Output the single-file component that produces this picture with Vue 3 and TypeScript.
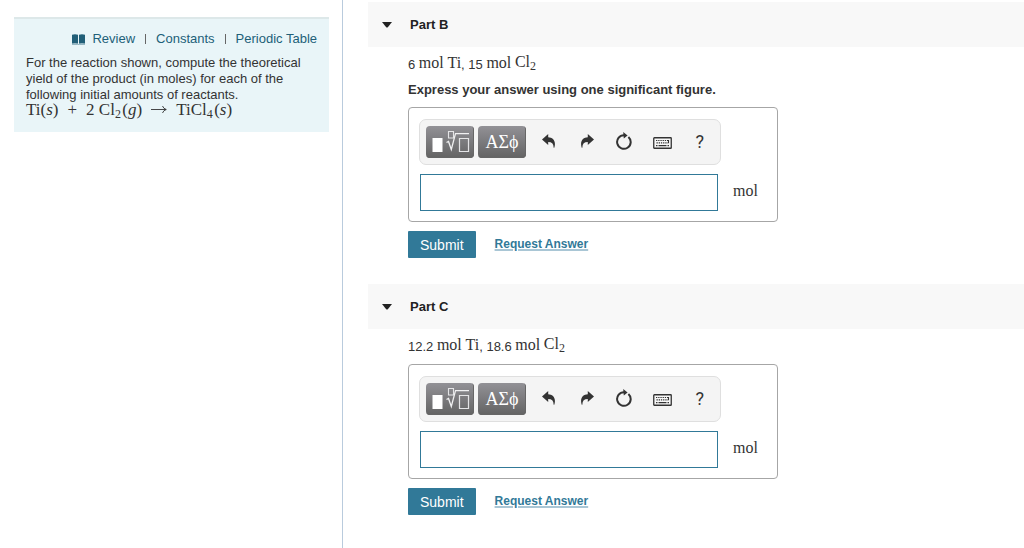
<script setup lang="ts">
import { reactive } from 'vue'

interface Part {
  id: string
  title: string
  titanium: string
  chlorine: string
  instruction?: string
}

const parts: Part[] = [
  {
    id: 'b',
    title: 'Part B',
    titanium: '6',
    chlorine: '15',
    instruction: 'Express your answer using one significant figure.',
  },
  { id: 'c', title: 'Part C', titanium: '12.2', chlorine: '18.6' },
]

const answers = reactive<Record<string, string>>({ b: '', c: '' })
const collapsed = reactive<Record<string, boolean>>({ b: false, c: false })
</script>

<template>
  <div class="page">
    <aside class="sidebar">
      <section class="problem">
        <nav class="resources">
          <a href="#review" class="review">
            <svg class="book" viewBox="0 0 13 11" aria-hidden="true">
              <path d="M0 .8Q3 -.4 6 .8V9.6Q3 8.8 0 9.6Z M7 .8Q10 -.4 13 .8V9.6Q10 8.8 7 9.6Z" fill="#215f78" />
              <path d="M0 10.2H5.6L6.5 10.7L7.4 10.2H13" fill="none" stroke="#215f78" stroke-width=".6" />
            </svg>
            Review
          </a>
          <span class="divider"></span>
          <a href="#constants">Constants</a>
          <span class="divider"></span>
          <a href="#periodic-table">Periodic Table</a>
        </nav>
        <p class="statement">
          For the reaction shown, compute the theoretical yield of the product (in moles) for each of the
          following initial amounts of reactants.
        </p>
        <p class="equation">
          <span>Ti(<i>s</i>)</span>
          <span>+</span>
          <span>2 Cl<sub>2</sub>&hairsp;(<i>g</i>)</span>
          <svg class="arrow" viewBox="0 0 16 9" aria-hidden="true">
            <path d="M0 4.5H15M11.5 1Q12.5 3.8 15.3 4.5Q12.5 5.2 11.5 8" fill="none" stroke="#333" stroke-width=".9" />
          </svg>
          <span>TiCl<sub>4</sub>&hairsp;(<i>s</i>)</span>
        </p>
      </section>
    </aside>

    <main class="content">
      <section v-for="part in parts" :key="part.id" class="part">
        <h2 class="part-header">
          <button
            type="button"
            class="toggle"
            :aria-expanded="!collapsed[part.id]"
            @click="collapsed[part.id] = !collapsed[part.id]"
          >
            <svg class="caret" viewBox="0 0 10 6" aria-hidden="true">
              <path d="M0 0H10L6 5Q5 6 4 5Z" fill="#222" />
            </svg>
            {{ part.title }}
          </button>
        </h2>

        <form v-if="!collapsed[part.id]" class="part-body" @submit.prevent>
          <p class="given">
            {{ part.titanium }} <span class="math">mol Ti</span>, {{ part.chlorine }}
            <span class="math">mol</span> <span class="math species">Cl<sub>2</sub></span>
          </p>
          <p v-if="part.instruction" class="instruction">{{ part.instruction }}</p>

          <div class="editor">
            <div class="toolbar">
              <button type="button" class="palette" aria-label="Templates">
                <svg class="template-icon" viewBox="0 0 48 32" aria-hidden="true">
                  <rect x="6.5" y="12" width="10" height="14" fill="#fff" />
                  <path d="M22.5 5.5H27.5V12H22.5Z" fill="none" stroke="#e4e4e6" stroke-width="1.1" />
                  <path d="M20.5 16.5L22.5 15.5L25.3 23.5L29.5 7.7H43" fill="none" stroke="#f0f0f1" stroke-width="1.3" />
                  <path d="M33.5 12.5H42.5V25.5H33.5Z" fill="none" stroke="#e4e4e6" stroke-width="1.2" />
                </svg>
              </button>
              <button type="button" class="palette">ΑΣϕ</button>
              <button type="button" class="tool" aria-label="Undo">
                <svg width="14" height="14" viewBox="0 0 14 14" aria-hidden="true">
                  <path d="M0 5.5L6.2 0V3.2C11 3.4 14.4 7 12.3 13.7H11.6C11.8 10 10 8 6.2 8V11Z" fill="#333" />
                </svg>
              </button>
              <button type="button" class="tool" aria-label="Redo">
                <svg width="14" height="14" viewBox="0 0 14 14" aria-hidden="true">
                  <path d="M14 5.5L7.8 0V3.2C3 3.4 -.4 7 1.7 13.7H2.4C2.2 10 4 8 7.8 8V11Z" fill="#333" />
                </svg>
              </button>
              <button type="button" class="tool" aria-label="Reset">
                <svg width="16" height="18" viewBox="0 0 16 18" aria-hidden="true">
                  <path d="M12.4 4.9A6.8 6.8 0 1 1 8 3.2" fill="none" stroke="#333" stroke-width="2" />
                  <path d="M7.2 0L11.6 3.4L7.8 6.6Z" fill="#333" />
                </svg>
              </button>
              <button type="button" class="tool" aria-label="Keyboard shortcuts">
                <svg class="keyboard" width="19" height="12" viewBox="0 0 19 12" aria-hidden="true">
                  <rect x=".75" y=".75" width="17.5" height="10.5" rx=".6" fill="#f8f8f8" stroke="#333" stroke-width="1.3" />
                  <path d="M3 3.5H16M3.5 5.8H15" fill="none" stroke="#333" stroke-width="1.2" stroke-dasharray="1.3 .9" />
                  <path d="M3 8.6H4.5M5.5 8.6H13.5M14.5 8.6H16M15.5 3V6.2" fill="none" stroke="#333" stroke-width="1.1" />
                </svg>
              </button>
              <button type="button" class="tool help" aria-label="Help">?</button>
            </div>
            <div class="answer-row">
              <input
                :id="`answer-${part.id}`"
                v-model="answers[part.id]"
                class="answer"
                type="text"
                autocomplete="off"
              />
              <label class="unit" :for="`answer-${part.id}`">mol</label>
            </div>
          </div>

          <div class="actions">
            <button type="submit" class="submit">Submit</button>
            <a class="request" href="#request-answer">Request Answer</a>
          </div>
        </form>
      </section>
    </main>
  </div>
</template>

<style>
body {
  margin: 0;
  background: #fff;
}
</style>

<style scoped>
* {
  box-sizing: border-box;
}

.page {
  display: flex;
  min-height: 100vh;
  font-family: "Liberation Sans", Arial, sans-serif;
  font-size: 13px;
  line-height: 16px;
  color: #333;
}

h2,
p {
  margin: 0;
}

button {
  padding: 0;
  border: 0;
  background: none;
  font-family: inherit;
  color: inherit;
  cursor: pointer;
}

.sidebar {
  flex: 0 0 343px;
  padding: 17px 13px 0 14px;
  border-right: 1px solid #b9cbdd;
}

.problem {
  padding: 12px 12px 16px;
  border-top: 2px solid #dde8e9;
  background: #e9f5f8;
}

.resources {
  display: flex;
  align-items: center;
  justify-content: flex-end;
  gap: 10px;
}

.resources a {
  color: #215f78;
  text-decoration: none;
}

.review {
  display: flex;
  align-items: center;
  gap: 7px;
}

.book {
  width: 13px;
  height: 11px;
}

.divider {
  width: 1px;
  height: 10px;
  background: #666;
}

.statement {
  margin-top: 8px;
}

.equation {
  display: flex;
  align-items: center;
  gap: 9px;
  font-family: "Liberation Serif", "Times New Roman", serif;
  font-size: 17px;
  line-height: 13px;
}

sub {
  font-size: 12px;
  line-height: 0;
  vertical-align: -3px;
}

.arrow {
  width: 16px;
  height: 9px;
}

.content {
  flex: 1;
  min-width: 0;
  padding: 2px 0 0 25px;
}

.part {
  margin-bottom: 26px;
}

.part-header {
  display: flex;
  height: 45px;
  background: #f8f8f8;
}

.toggle {
  display: flex;
  flex: 1;
  align-items: center;
  gap: 18px;
  padding-left: 14px;
  font-size: 13px;
  font-weight: bold;
  color: #222;
}

.caret {
  width: 10px;
  height: 6px;
}

.part-body {
  padding: 0 16px 0 40px;
}

.given {
  height: 35px;
  padding-top: 10px;
}

.math {
  font-family: "Liberation Serif", "Times New Roman", serif;
  font-size: 16px;
  line-height: 0;
  vertical-align: 1px;
}

.species {
  vertical-align: 2px;
}

.instruction {
  margin-bottom: 9px;
  font-weight: bold;
}

.editor {
  max-width: 370px;
  padding: 11px 10px 10px;
  border: 1px solid #a6a6a6;
  border-radius: 4px;
}

.toolbar {
  display: flex;
  align-items: center;
  width: 302px;
  height: 46px;
  padding: 0 2px 0 6px;
  border: 1px solid #dfdfdf;
  border-radius: 7px;
  background: #f4f4f4;
}

.palette {
  width: 48px;
  height: 32px;
  margin-right: 4px;
  border-radius: 4px;
  background: linear-gradient(#929196, #636363);
  box-shadow: inset -1px -1px 0 #666;
  font-family: "Liberation Serif", "Times New Roman", serif;
  font-size: 18px;
  color: #fff;
}

.template-icon {
  display: block;
  width: 48px;
  height: 32px;
}

.tool {
  display: flex;
  flex: 1;
  align-items: center;
  justify-content: center;
  height: 32px;
  padding: 0 0 2px 1px;
}

.keyboard {
  margin-top: 4px;
}

.help {
  font-family: Roboto, "Liberation Sans", sans-serif;
  font-size: 18px;
}

.answer-row {
  display: flex;
  align-items: center;
  gap: 15px;
  margin: 9px 0 0 1px;
}

.answer {
  width: 298px;
  height: 37px;
  padding: 0 8px;
  border: 1px solid #317998;
  border-radius: 0;
  background: #fff;
  font-size: 16px;
}

.unit {
  padding-bottom: 4px;
  font-family: "Liberation Serif", "Times New Roman", serif;
  font-size: 16px;
}

.actions {
  display: flex;
  align-items: center;
  gap: 19px;
  margin-top: 9px;
}

.submit {
  height: 27px;
  padding: 0 12px;
  border-radius: 1px;
  background: #317998;
  font-size: 14px;
  color: #fff;
}

.request {
  padding-bottom: 2px;
  font-size: 12px;
  font-weight: bold;
  color: #317998;
  text-decoration-color: #a9c6d5;
  text-decoration-thickness: 2px;
}
</style>
